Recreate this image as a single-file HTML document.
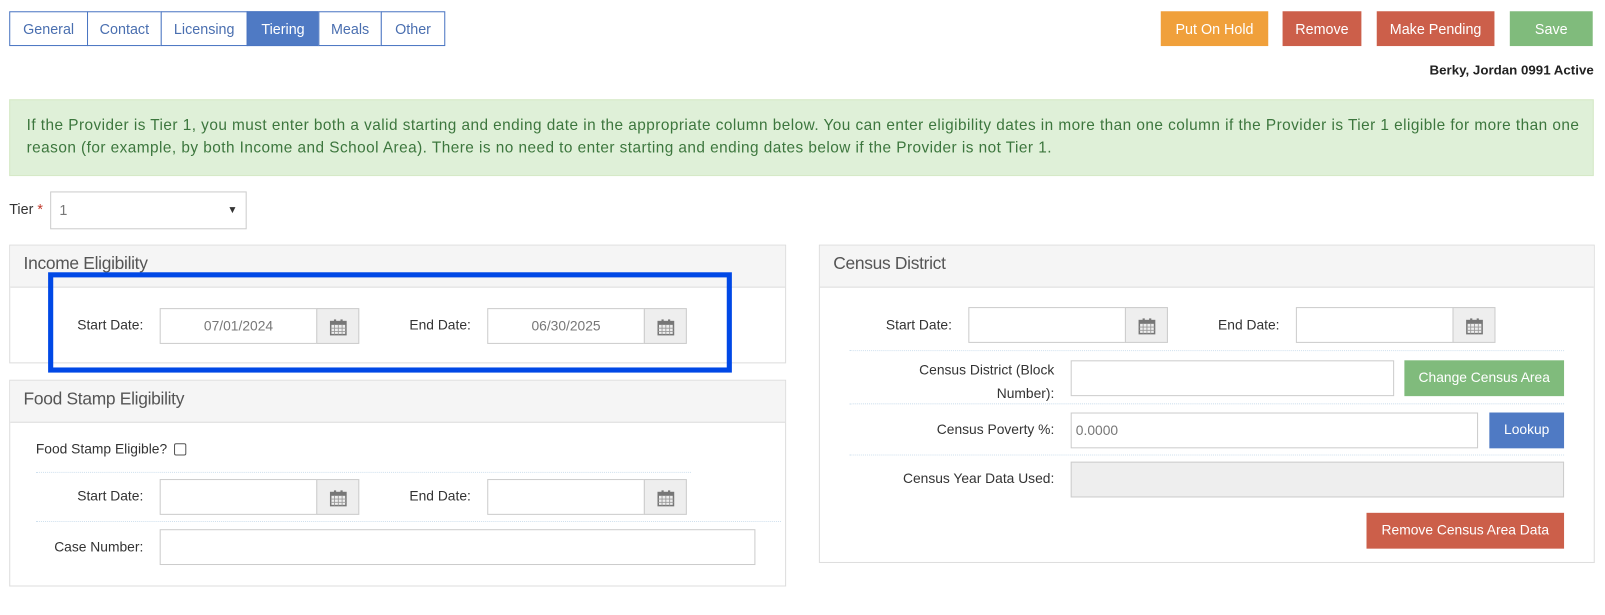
<!DOCTYPE html>
<html><head><meta charset="utf-8"><style>
*{box-sizing:border-box;margin:0;padding:0}
html,body{width:1605px;height:615px;overflow:hidden;background:#fff}
#w{position:absolute;left:0;top:0;width:1568px;height:601px;transform:scale(1.0236);transform-origin:0 0;font-family:"Liberation Sans",sans-serif;font-size:13px;color:#333}
.a{position:absolute}
.tab{position:absolute;top:11px;height:34px;border:1px solid #4a75c2;color:#4a6fb0;font-size:14px;line-height:32px;text-align:center;background:#fff}
.btn{position:absolute;top:11px;height:34px;color:#fff;font-size:14px;line-height:34px;text-align:center}
.panel{position:absolute;border:1px solid #ddd;background:#fff}
.ph{height:41px;background:#f5f5f5;border-bottom:1px solid #ddd;font-size:17px;color:#555;padding:8px 13px;letter-spacing:-0.3px}
.lbl{position:absolute;text-align:right;font-size:13.5px;color:#333}
.inp{position:absolute;border:1px solid #ccc;background:#fff;height:35px;font-size:13.5px;color:#777;line-height:33px}
.add{position:absolute;border:1px solid #ccc;background:#eee;height:35px;width:42px}
.add svg{position:absolute;left:12px;top:9px}
.dot{position:absolute;border-top:1px dotted #cfe0ee;height:0}
</style></head><body><div id="w">
<div class="tab" style="left:9px;width:77px">General</div>
<div class="tab" style="left:85px;width:73px">Contact</div>
<div class="tab" style="left:157px;width:85px">Licensing</div>
<div class="tab" style="left:241px;width:71px;background:#4f7ac4;color:#fff">Tiering</div>
<div class="tab" style="left:311px;width:62px">Meals</div>
<div class="tab" style="left:372px;width:63px">Other</div>

<div class="btn" style="left:1134px;width:105px;background:#f0a03b">Put On Hold</div>
<div class="btn" style="left:1253px;width:77px;background:#cc5f4a">Remove</div>
<div class="btn" style="left:1345px;width:115px;background:#cc5f4a">Make Pending</div>
<div class="btn" style="left:1475px;width:81px;background:#80bb7c">Save</div>
<div class="a" style="right:11px;top:61px;font-weight:bold;font-size:13px;color:#222">Berky, Jordan 0991 Active</div>

<div class="a" style="left:9px;top:97px;width:1548px;height:75px;background:#dff0d8;border:1px solid #d6e9c6;color:#3c763d;font-size:15px;line-height:22px;padding:14px 16px;letter-spacing:0.45px;white-space:nowrap">If the Provider is Tier 1, you must enter both a valid starting and ending date in the appropriate column below. You can enter eligibility dates in more than one column if the Provider is Tier 1 eligible for more than one<br>reason (for example, by both Income and School Area). There is no need to enter starting and ending dates below if the Provider is not Tier 1.</div>

<div class="a" style="left:9px;top:196px;font-size:14px">Tier <span style="color:#c0392b">*</span></div>
<div class="inp" style="left:49px;top:187px;width:192px;height:37px;line-height:35px;padding-left:8px;font-size:14px">1<span style="position:absolute;right:8px;top:0;color:#333;font-size:10px">▼</span></div>

<svg width="0" height="0" style="position:absolute"><defs><symbol id="cal" viewBox="0 0 16 16"><rect x="1" y="3" width="14" height="12" fill="none" stroke="#777" stroke-width="1.4"/><rect x="1" y="3" width="14" height="3" fill="#777"/><rect x="4" y="1" width="2" height="4" fill="#777"/><rect x="10" y="1" width="2" height="4" fill="#777"/><path d="M1 9h14M1 12h14M4.5 6v9M8 6v9M11.5 6v9" stroke="#999" stroke-width="0.8"/></symbol></defs></svg>

<div class="panel" style="left:9px;top:239px;width:759px;height:116px"><div class="ph">Income Eligibility</div></div>
<div class="lbl" style="left:40px;width:100px;top:310px">Start Date:</div>
<div class="inp" style="left:156px;top:301px;width:154px;text-align:center">07/01/2024</div>
<div class="add" style="left:309px;top:301px"><svg width="17" height="17"><use href="#cal"/></svg></div>
<div class="lbl" style="left:360px;width:100px;top:310px">End Date:</div>
<div class="inp" style="left:476px;top:301px;width:154px;text-align:center">06/30/2025</div>
<div class="add" style="left:629px;top:301px"><svg width="17" height="17"><use href="#cal"/></svg></div>
<div class="a" style="left:47px;top:266px;width:668px;height:98px;border:5px solid #0048e6"></div>

<div class="panel" style="left:9px;top:371px;width:759px;height:202px"><div class="ph">Food Stamp Eligibility</div></div>
<div class="a" style="left:35px;top:431px;font-size:13.5px">Food Stamp Eligible? <span style="display:inline-block;width:12px;height:12px;border:1px solid #555;border-radius:2px;vertical-align:-2px;margin-left:3px"></span></div>
<div class="dot" style="left:35px;top:461px;width:640px"></div>
<div class="lbl" style="left:40px;width:100px;top:477px">Start Date:</div>
<div class="inp" style="left:156px;top:468px;width:154px"></div>
<div class="add" style="left:309px;top:468px"><svg width="17" height="17"><use href="#cal"/></svg></div>
<div class="lbl" style="left:360px;width:100px;top:477px">End Date:</div>
<div class="inp" style="left:476px;top:468px;width:154px"></div>
<div class="add" style="left:629px;top:468px"><svg width="17" height="17"><use href="#cal"/></svg></div>
<div class="dot" style="left:35px;top:509px;width:728px"></div>
<div class="lbl" style="left:20px;width:120px;top:527px">Case Number:</div>
<div class="inp" style="left:156px;top:517px;width:582px"></div>

<div class="panel" style="left:800px;top:239px;width:758px;height:311px"><div class="ph">Census District</div></div>
<div class="lbl" style="left:830px;width:100px;top:310px">Start Date:</div>
<div class="inp" style="left:946px;top:300px;width:154px"></div>
<div class="add" style="left:1099px;top:300px"><svg width="17" height="17"><use href="#cal"/></svg></div>
<div class="lbl" style="left:1150px;width:100px;top:310px">End Date:</div>
<div class="inp" style="left:1266px;top:300px;width:154px"></div>
<div class="add" style="left:1419px;top:300px"><svg width="17" height="17"><use href="#cal"/></svg></div>
<div class="dot" style="left:830px;top:342px;width:698px"></div>
<div class="lbl" style="left:850px;width:180px;top:350px;line-height:23px">Census District (Block<br>Number):</div>
<div class="inp" style="left:1046px;top:352px;width:316px"></div>
<div class="btn" style="left:1372px;top:352px;width:156px;height:35px;background:#80bb7c;font-size:13.5px">Change Census Area</div>
<div class="dot" style="left:830px;top:394px;width:698px"></div>
<div class="lbl" style="left:850px;width:180px;top:412px">Census Poverty %:</div>
<div class="inp" style="left:1046px;top:403px;width:398px;padding-left:4px">0.0000</div>
<div class="btn" style="left:1455px;top:403px;width:73px;height:35px;background:#4f7ac4;font-size:13.5px">Lookup</div>
<div class="dot" style="left:830px;top:444px;width:698px"></div>
<div class="lbl" style="left:850px;width:180px;top:460px">Census Year Data Used:</div>
<div class="inp" style="left:1046px;top:451px;width:482px;background:#eee"></div>
<div class="btn" style="left:1335px;top:501px;width:193px;height:35px;background:#cc5f4a;font-size:13.5px">Remove Census Area Data</div>
</div></body></html>
